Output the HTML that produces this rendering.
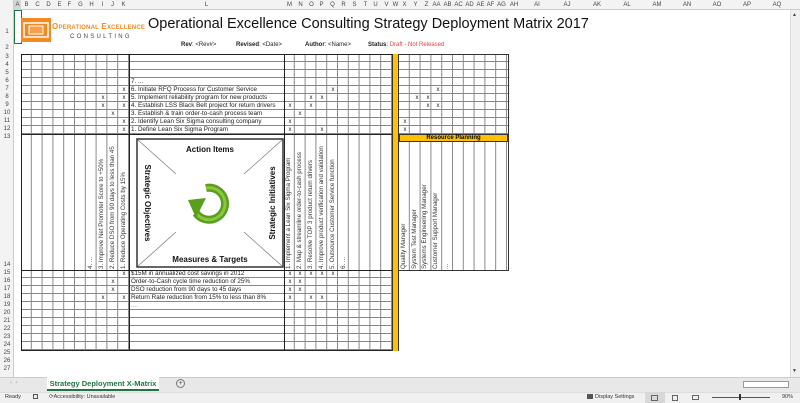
<!DOCTYPE html>
<html><head><meta charset="utf-8"><style>
*{margin:0;padding:0;box-sizing:border-box}
body{width:800px;height:403px;overflow:hidden;background:#fff;font-family:"Liberation Sans",Arial,sans-serif;position:relative}
.a{position:absolute}
.ch{position:absolute;top:0;height:10px;font-size:6px;color:#444;text-align:center;line-height:10px}
.rn{position:absolute;left:0;width:14px;font-size:6px;color:#444;text-align:center}
.gb{background-image:linear-gradient(to right,transparent calc(100% - 1px),#888 0),linear-gradient(to bottom,transparent calc(100% - 1px),#888 0);background-size:10.8px 8px}
.gh{background-image:linear-gradient(to bottom,transparent calc(100% - 1px),#888 0);background-size:10px 8px}
.gv{background-image:linear-gradient(to right,transparent calc(100% - 1px),#888 0);background-size:10.8px 8px}
.t{position:absolute;font-size:6.3px;color:#222;white-space:nowrap;line-height:8px}
.x{position:absolute;font-size:6px;color:#222;line-height:8px;width:6px;text-align:center}
.v{position:absolute;font-size:6.2px;color:#333;white-space:nowrap;transform-origin:0 0;transform:rotate(-90deg);line-height:8px}
</style></head><body>
<div class="a" style="left:0;top:0;width:800px;height:10px;background:#f3f3f3;border-bottom:1px solid #ccc"></div>
<div class="a" style="left:0;top:0;width:14px;height:403px;background:#f3f3f3;border-right:1px solid #ccc"></div>
<div class="a" style="left:14px;top:0;width:7px;height:10px;background:#d6d6d6"></div>
<div class="ch" style="left:14px;width:7px">A</div>
<div class="ch" style="left:21px;width:11px">B</div><div class="ch" style="left:32px;width:11px">C</div><div class="ch" style="left:43px;width:11px">D</div><div class="ch" style="left:54px;width:11px">E</div><div class="ch" style="left:64px;width:11px">F</div><div class="ch" style="left:75px;width:11px">G</div><div class="ch" style="left:86px;width:11px">H</div><div class="ch" style="left:97px;width:11px">I</div><div class="ch" style="left:107px;width:11px">J</div><div class="ch" style="left:118px;width:11px">K</div>
<div class="ch" style="left:129px;width:155px">L</div>
<div class="ch" style="left:284px;width:11px">M</div><div class="ch" style="left:295px;width:11px">N</div><div class="ch" style="left:306px;width:11px">O</div><div class="ch" style="left:316px;width:11px">P</div><div class="ch" style="left:327px;width:11px">Q</div><div class="ch" style="left:338px;width:11px">R</div><div class="ch" style="left:349px;width:11px">S</div><div class="ch" style="left:360px;width:11px">T</div><div class="ch" style="left:370px;width:11px">U</div><div class="ch" style="left:381px;width:11px">V</div>
<div class="ch" style="left:392px;width:7px">W</div>
<div class="ch" style="left:399px;width:11px">X</div><div class="ch" style="left:410px;width:11px">Y</div><div class="ch" style="left:421px;width:11px">Z</div><div class="ch" style="left:431px;width:11px">AA</div><div class="ch" style="left:442px;width:11px">AB</div><div class="ch" style="left:453px;width:11px">AC</div><div class="ch" style="left:464px;width:11px">AD</div><div class="ch" style="left:475px;width:11px">AE</div><div class="ch" style="left:485px;width:11px">AF</div><div class="ch" style="left:496px;width:11px">AG</div><div class="ch" style="left:507px;width:14px">AH</div>
<div class="ch" style="left:522px;width:30px">AI</div><div class="ch" style="left:552px;width:30px">AJ</div><div class="ch" style="left:582px;width:30px">AK</div><div class="ch" style="left:612px;width:30px">AL</div><div class="ch" style="left:642px;width:30px">AM</div><div class="ch" style="left:672px;width:30px">AN</div><div class="ch" style="left:702px;width:30px">AO</div><div class="ch" style="left:732px;width:30px">AP</div><div class="ch" style="left:762px;width:30px">AQ</div>
<div class="rn" style="top:29px">1</div><div class="rn" style="top:45px">2</div>
<div class="rn" style="top:54px">3</div><div class="rn" style="top:62px">4</div><div class="rn" style="top:70px">5</div><div class="rn" style="top:78px">6</div><div class="rn" style="top:86px">7</div><div class="rn" style="top:94px">8</div><div class="rn" style="top:102px">9</div><div class="rn" style="top:110px">10</div><div class="rn" style="top:118px">11</div><div class="rn" style="top:126px">12</div><div class="rn" style="top:134px">13</div><div class="rn" style="top:262px">14</div>
<div class="rn" style="top:270px">15</div><div class="rn" style="top:278px">16</div><div class="rn" style="top:286px">17</div><div class="rn" style="top:294px">18</div><div class="rn" style="top:302px">19</div><div class="rn" style="top:310px">20</div><div class="rn" style="top:318px">21</div><div class="rn" style="top:326px">22</div><div class="rn" style="top:334px">23</div><div class="rn" style="top:342px">24</div><div class="rn" style="top:350px">25</div><div class="rn" style="top:358px">26</div><div class="rn" style="top:366px">27</div>
<div class="a" style="left:14px;top:10px;width:8px;height:34px;border:1px solid #217346"></div>
<svg class="a" style="left:21px;top:18px" width="30" height="24" viewBox="0 0 30 24"><rect x="0" y="0" width="30" height="24" fill="#f28a22"/><rect x="3" y="5" width="24" height="14" fill="none" stroke="#fff" stroke-width="1.5"/><rect x="8" y="8" width="14" height="8" fill="#f6a04a" stroke="#fff" stroke-width="1"/></svg>
<div class="a" style="left:52px;top:22px;font-size:8px;font-weight:bold;color:#f28a22;letter-spacing:0.2px">O<span style="font-size:6px">PERATIONAL</span> E<span style="font-size:6px">XCELLENCE</span></div>
<div class="a" style="left:70px;top:34px;font-size:6px;color:#444;letter-spacing:2.3px">CONSULTING</div>
<div class="a" style="left:148px;top:16px;font-size:14.5px;color:#111">Operational Excellence Consulting Strategy Deployment Matrix 2017</div>
<div class="a" style="left:181px;top:42px;font-size:6px;color:#222"><b>Rev</b>: &lt;Rev#&gt;</div>
<div class="a" style="left:236px;top:42px;font-size:6px;color:#222"><b>Revised</b>: &lt;Date&gt;</div>
<div class="a" style="left:305px;top:42px;font-size:6px;color:#222"><b>Author</b>: &lt;Name&gt;</div>
<div class="a" style="left:368px;top:42px;font-size:6px;color:#222"><b>Status</b>: <span style="color:#e84040">Draft - Not Released</span></div>
<div class="a gb" style="left:21px;top:54px;width:108px;height:80px"></div>
<div class="a gh" style="left:129px;top:54px;width:155px;height:80px"></div>
<div class="a gb" style="left:284px;top:54px;width:108px;height:80px"></div>
<div class="a gv" style="left:21px;top:134px;width:108px;height:136px"></div>
<div class="a gv" style="left:284px;top:134px;width:108px;height:136px"></div>
<div class="a gb" style="left:21px;top:270px;width:108px;height:80px"></div>
<div class="a gh" style="left:129px;top:270px;width:155px;height:80px"></div>
<div class="a gb" style="left:284px;top:270px;width:108px;height:80px"></div>
<div class="a" style="left:21px;top:54px;width:372px;height:297px;border:1px solid #222"></div>
<div class="a" style="left:129px;top:54px;width:1px;height:297px;background:#222"></div>
<div class="a" style="left:284px;top:54px;width:1px;height:297px;background:#222"></div>
<div class="a" style="left:21px;top:134px;width:372px;height:1px;background:#222"></div>
<div class="a" style="left:21px;top:270px;width:372px;height:1px;background:#222"></div>
<div class="a" style="left:392px;top:54px;width:7px;height:297px;background:#ffc000;border-left:1px solid #333;border-right:1px solid #333"></div>
<div class="a gb" style="left:399px;top:54px;width:109px;height:80px"></div>
<div class="a gv" style="left:399px;top:142px;width:109px;height:128px"></div>
<div class="a" style="left:399px;top:134px;width:109px;height:8px;background:#ffc000;border:1px solid #333;font-size:6px;font-weight:bold;text-align:center;line-height:6px">Resource Planning</div>
<div class="a" style="left:399px;top:54px;width:110px;height:217px;border:1px solid #333;border-left:none"></div>
<div class="t" style="left:131px;top:78px">7. ...</div>
<div class="t" style="left:131px;top:86px">6. Initiate RFQ Process for Customer Service</div>
<div class="t" style="left:131px;top:94px">5. Implement reliability program for new products</div>
<div class="t" style="left:131px;top:102px">4. Establish LSS Black Belt project for return drivers</div>
<div class="t" style="left:131px;top:110px">3. Establish &amp; train order-to-cash process team</div>
<div class="t" style="left:131px;top:118px">2. Identify Lean Six Sigma consulting company</div>
<div class="t" style="left:131px;top:126px">1. Define Lean Six Sigma Program</div>
<div class="t" style="left:131px;top:270px">$15M in annualized cost savings in 2012</div>
<div class="t" style="left:131px;top:278px">Order-to-Cash cycle time reduction of 25%</div>
<div class="t" style="left:131px;top:286px">DSO reduction from 90 days to 45 days</div>
<div class="t" style="left:131px;top:294px">Return Rate reduction from 15% to less than 8%</div>
<div class="t" style="left:131px;top:302px;color:#999">....</div>
<div class="x" style="left:121px;top:86px">x</div><div class="x" style="left:330px;top:86px">x</div><div class="x" style="left:435px;top:86px">x</div>
<div class="x" style="left:100px;top:94px">x</div><div class="x" style="left:121px;top:94px">x</div><div class="x" style="left:308px;top:94px">x</div><div class="x" style="left:319px;top:94px">x</div><div class="x" style="left:414px;top:94px">x</div><div class="x" style="left:425px;top:94px">x</div>
<div class="x" style="left:100px;top:102px">x</div><div class="x" style="left:121px;top:102px">x</div><div class="x" style="left:287px;top:102px">x</div><div class="x" style="left:308px;top:102px">x</div><div class="x" style="left:425px;top:102px">x</div><div class="x" style="left:435px;top:102px">x</div>
<div class="x" style="left:110px;top:110px">x</div><div class="x" style="left:297px;top:110px">x</div>
<div class="x" style="left:121px;top:118px">x</div><div class="x" style="left:287px;top:118px">x</div><div class="x" style="left:402px;top:118px">x</div>
<div class="x" style="left:121px;top:126px">x</div><div class="x" style="left:287px;top:126px">x</div><div class="x" style="left:319px;top:126px">x</div><div class="x" style="left:402px;top:126px">x</div>
<div class="x" style="left:121px;top:270px">x</div><div class="x" style="left:287px;top:270px">x</div><div class="x" style="left:297px;top:270px">x</div><div class="x" style="left:308px;top:270px">x</div><div class="x" style="left:319px;top:270px">x</div><div class="x" style="left:330px;top:270px">x</div>
<div class="x" style="left:110px;top:278px">x</div><div class="x" style="left:287px;top:278px">x</div><div class="x" style="left:297px;top:278px">x</div>
<div class="x" style="left:110px;top:286px">x</div><div class="x" style="left:287px;top:286px">x</div><div class="x" style="left:297px;top:286px">x</div>
<div class="x" style="left:100px;top:294px">x</div><div class="x" style="left:121px;top:294px">x</div><div class="x" style="left:287px;top:294px">x</div><div class="x" style="left:308px;top:294px">x</div><div class="x" style="left:319px;top:294px">x</div>
<div class="v" style="left:87px;top:269px">4. ...</div>
<div class="v" style="left:98px;top:269px">3. Improve Net Promoter Score to +50%</div>
<div class="v" style="left:109px;top:269px">2. Reduce DSO from 90 days to less than 45</div>
<div class="v" style="left:120px;top:269px">1. Reduce Operating Costs by 15%</div>
<div class="v" style="left:285px;top:269px">1. Implement a Lean Six Sigma Program</div>
<div class="v" style="left:296px;top:269px">2. Map &amp; streamline order-to-cash process</div>
<div class="v" style="left:307px;top:269px">3. Resolve TOP 3 product return drivers</div>
<div class="v" style="left:318px;top:269px">4. Improve product verification and validation</div>
<div class="v" style="left:329px;top:269px">5. Outsource Customer Service function</div>
<div class="v" style="left:340px;top:269px">6. ...</div>
<div class="v" style="left:400px;top:269px">Quality Manager</div>
<div class="v" style="left:411px;top:269px">System Test Manager</div>
<div class="v" style="left:421px;top:269px">Systems Engineering Manager</div>
<div class="v" style="left:432px;top:269px">Customer Support Manager</div>
<div class="v" style="left:443px;top:269px">...</div>
<svg class="a" style="left:136px;top:138px" width="149" height="131" viewBox="0 0 149 131">
<rect x="1" y="1" width="146" height="128" fill="#fff" stroke="#333" stroke-width="1.5"/>
<g stroke="#777" stroke-width="0.7"><line x1="2" y1="2" x2="40" y2="36"/><line x1="146" y1="2" x2="108" y2="36"/><line x1="2" y1="128" x2="40" y2="94"/><line x1="146" y1="128" x2="108" y2="94"/></g>
<text x="74" y="14" font-size="8" font-weight="bold" text-anchor="middle" fill="#111" font-family="Liberation Sans">Action Items</text>
<text x="74" y="124" font-size="8" font-weight="bold" text-anchor="middle" fill="#111" font-family="Liberation Sans">Measures &amp; Targets</text>
<text transform="translate(9,65) rotate(90)" font-size="8" font-weight="bold" text-anchor="middle" fill="#111" font-family="Liberation Sans">Strategic Objectives</text>
<text transform="translate(139,65) rotate(-90)" font-size="8" font-weight="bold" text-anchor="middle" fill="#111" font-family="Liberation Sans">Strategic Initiatives</text>
<path d="M70 50 A16 16 0 1 1 60 75" fill="none" stroke="#5a9e1e" stroke-width="8"/>
<path d="M70 50 A16 16 0 1 1 60 75" fill="none" stroke="#8cc63f" stroke-width="3"/>
<polygon points="52,62 70,60 60,80" fill="#5a9e1e"/>
</svg>
<div class="a" style="left:790px;top:10px;width:10px;height:367px;background:#f0f0f0;border-left:1px solid #ddd"></div>
<div class="a" style="left:792px;top:12px;font-size:5px;color:#444">▲</div>
<div class="a" style="left:792px;top:368px;font-size:5px;color:#444">▼</div>
<div class="a" style="left:0;top:377px;width:800px;height:15px;background:#e8e8e8;border-top:1px solid #ccc"></div>
<div class="a" style="left:10px;top:380px;font-size:6px;color:#aaa">‹ &nbsp;›</div>
<div class="a" style="left:47px;top:377px;width:112px;height:14px;background:#fff;border-bottom:2px solid #217346;font-size:7.5px;font-weight:bold;color:#217346;text-align:center;line-height:13px">Strategy Deployment X-Matrix</div>
<div class="a" style="left:176px;top:379px;width:9px;height:9px;border:1px solid #777;border-radius:50%;font-size:7px;line-height:7px;text-align:center;color:#555">+</div>
<div class="a" style="left:743px;top:381px;width:46px;height:7px;background:#fff;border:1px solid #999"></div>
<div class="a" style="left:0;top:392px;width:800px;height:11px;background:#f0f0f0;border-top:1px solid #ddd"></div>
<div class="a" style="left:5px;top:394px;font-size:5.5px;color:#333">Ready</div>
<div class="a" style="left:33px;top:394px;width:5px;height:5px;border:1px solid #555"></div>
<div class="a" style="left:49px;top:394px;font-size:5.5px;color:#333">⟳Accessibility: Unavailable</div>
<div class="a" style="left:587px;top:394px;width:6px;height:5px;background:#555"></div>
<div class="a" style="left:595px;top:394px;font-size:5.5px;color:#333">Display Settings</div>
<div class="a" style="left:645px;top:392px;width:20px;height:11px;background:#d8d8d8"></div>
<div class="a" style="left:651px;top:395px;width:7px;height:6px;border:1px solid #666"></div>
<div class="a" style="left:672px;top:395px;width:6px;height:6px;border:1px solid #666"></div>
<div class="a" style="left:692px;top:395px;width:7px;height:5px;border:1px solid #666"></div>
<div class="a" style="left:712px;top:397px;width:58px;height:1px;background:#555"></div>
<div class="a" style="left:739px;top:394px;width:2px;height:6px;background:#333"></div>
<div class="a" style="left:782px;top:394px;font-size:5.5px;color:#333">90%</div>
</body></html>
